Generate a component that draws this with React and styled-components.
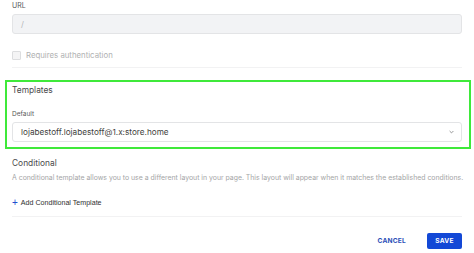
import styled, { createGlobalStyle } from "styled-components"

const Global = createGlobalStyle`
    html, body {
        margin: 0;
        padding: 0;
        background: #ffffff;
    }
    body {
        font-family: Inter, "Open Sans", sans-serif;
        color: #3f3f40;
    }
`

const Page = styled.div`
    width: 474px;
    height: 253px;
    box-sizing: border-box;
    padding: 1px 12px 0;
    display: flex;
    flex-direction: column;
    overflow: hidden;
`

const Label = styled.div`
    font-size: ${p => p.small ? '6.5px' : '7px'};
    line-height: 10px;
    color: #585959;
    margin-top: ${p => p.top || 0}px;
`

const Field = styled.div`
    height: 20px;
    box-sizing: border-box;
    margin-top: 3px;
    border: 1px solid #e3e4e6;
    border-radius: 3px;
    background: ${p => p.disabled ? '#f2f3f5' : '#ffffff'};
    display: flex;
    align-items: center;
    justify-content: space-between;
    padding: 0 7px 0 8px;
    font-size: ${p => p.disabled ? '8px' : '8.2px'};
    color: ${p => p.disabled ? '#b5b6b7' : '#3f3f40'};
`

const CheckRow = styled.div`
    display: flex;
    align-items: center;
    gap: 5px;
    margin-top: 16px;
    font-size: 7.8px;
    color: #b0b1b2;
`

const Box = styled.span`
    width: 7px;
    height: 7px;
    border: 1px solid #dcdddf;
    border-radius: 1px;
    background: #f4f4f5;
`

const Divider = styled.div`
    height: 1px;
    background: #f2f2f3;
    margin-top: ${p => p.top}px;
`

const Highlight = styled.section`
    margin: 12px -9px 0 -7px;
    padding: 2px 7px 5px 5px;
    border: 2px solid #3fe93a;
`

const Title = styled.div`
    font-size: 8.4px;
    line-height: 12px;
    color: #4a4a4b;
    margin-top: ${p => p.top || 0}px;
`

const Desc = styled.div`
    font-size: 6.9px;
    line-height: 10px;
    color: #a4a5a6;
    margin-top: 4px;
    white-space: nowrap;
`

const AddLink = styled.div`
    display: flex;
    align-items: center;
    gap: 3px;
    margin-top: 14px;
    font-family: "Liberation Sans", Arial, sans-serif;
    font-size: 7.1px;
    color: #2f2f30;
    & b {
        color: #1f4fd0;
        font-weight: 400;
        font-size: 10px;
    }
`

const Footer = styled.div`
    display: flex;
    justify-content: flex-end;
    align-items: center;
    gap: 21px;
    margin-top: 16px;
`

const TextButton = styled.span`
    font-size: 6.6px;
    font-weight: 700;
    letter-spacing: 0.2px;
    color: #2c4fb8;
`

const PrimaryButton = styled.span`
    width: 35px;
    height: 16px;
    border-radius: 2px;
    background: #1348d6;
    color: #ffffff;
    display: flex;
    align-items: center;
    justify-content: center;
    font-size: 6.6px;
    font-weight: 700;
    letter-spacing: 0.2px;
`

export default function App() {
    return (
        <Page>
            <Global />
            <Label>URL</Label>
            <Field disabled>/</Field>
            <CheckRow><Box />Requires authentication</CheckRow>
            <Divider top={7} />
            <Highlight>
                <Title>Templates</Title>
                <Label small top={13}>Default</Label>
                <Field>
                    <span>lojabestoff.lojabestoff@1.x:store.home</span>
                    <svg width="5" height="4" viewBox="0 0 5 4">
                        <path d="M0.6 1 L2.5 2.9 L4.4 1" fill="none" stroke="#8a8b8c" strokeWidth="0.9" />
                    </svg>
                </Field>
            </Highlight>
            <Title top={8}>Conditional</Title>
            <Desc>A conditional template allows you to use a different layout in your page. This layout will appear when it matches the established conditions.</Desc>
            <AddLink><b>+</b>Add Conditional Template</AddLink>
            <Divider top={8} />
            <Footer>
                <TextButton>CANCEL</TextButton>
                <PrimaryButton>SAVE</PrimaryButton>
            </Footer>
        </Page>
    )
}
